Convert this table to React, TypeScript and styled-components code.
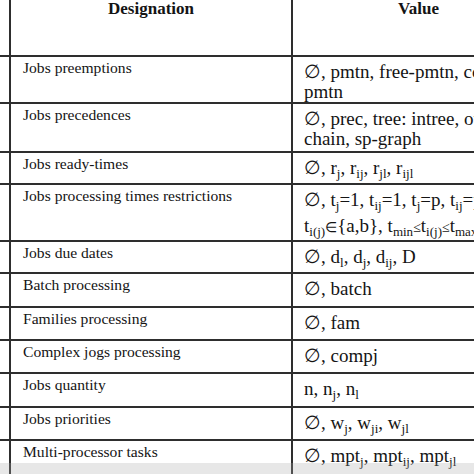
import React from "react";
import styled, { createGlobalStyle } from "styled-components";

const GlobalStyle = createGlobalStyle`
  html, body {
    margin: 0;
    padding: 0;
    background: #fff;
    overflow: hidden;
  }
`;

const Page = styled.div`
  position: relative;
  width: 474px;
  height: 474px;
  overflow: hidden;
  font-family: "Liberation Serif", "Times New Roman", serif;
  color: #141414;
`;

const Table = styled.table`
  border-collapse: collapse;
  table-layout: fixed;
  width: 544px;
  margin-top: -2px;
`;

const Row = styled.tr<{ $h: number }>`
  height: ${(p) => p.$h}px;
`;

const Cell = styled.td`
  border: 2px solid #2e2e2e;
  vertical-align: top;
  padding: 0;
`;

const EdgeCell = styled(Cell)`
  border-left: none;
`;

const HeadCell = styled(Cell)`
  border-top: none;
  text-align: center;
  font-weight: bold;
  font-size: 17px;
  line-height: 17px;
  padding-top: 2px;
`;

const NameCell = styled(Cell)`
  font-size: 15.6px;
  line-height: 18px;
  padding: 2px 0 0 12px;
  white-space: nowrap;
`;

const ValueCell = styled(Cell)`
  font-size: 19px;
  line-height: 20px;
  padding: 5px 0 0 11px;
  white-space: nowrap;
  border-right: none;
`;

const Line = styled.div<{ $gap?: number }>`
  margin-top: ${(p) => p.$gap ?? 0}px;
`;

const Sub = styled.sub`
  font-size: 13px;
  line-height: 0;
  vertical-align: -4px;
`;

const Small = styled.span`
  font-size: 14px;
`;

const Fade = styled.div`
  position: absolute;
  left: 0;
  right: 0;
  bottom: 0;
  height: 11px;
  background: rgba(170, 170, 170, 0.28);
`;

type Item = { name: string; h: number; value: React.ReactNode };

const items: Item[] = [
  {
    name: "Jobs preemptions",
    h: 47,
    value: (
      <>
        <Line>∅, pmtn, free-pmtn, cons-</Line>
        <Line>pmtn</Line>
      </>
    ),
  },
  {
    name: "Jobs precedences",
    h: 49,
    value: (
      <>
        <Line>∅, prec, tree: intree, outtree,</Line>
        <Line>chain, sp-graph</Line>
      </>
    ),
  },
  {
    name: "Jobs ready-times",
    h: 32,
    value: (
      <Line>
        ∅, r<Sub>j</Sub>, r<Sub>ij</Sub>, r<Sub>jl</Sub>, r<Sub>ijl</Sub>
      </Line>
    ),
  },
  {
    name: "Jobs processing times restrictions",
    h: 57,
    value: (
      <>
        <Line>
          ∅, t<Sub>j</Sub>=1, t<Sub>ij</Sub>=1, t<Sub>j</Sub>=p, t<Sub>ij</Sub>=p
        </Line>
        <Line $gap={6}>
          t<Sub>i(j)</Sub>
          <Small>∈</Small>
          {"{"}a,b{"}"}, t<Sub>min</Sub>
          <Small>≤</Small>t<Sub>i(j)</Sub>
          <Small>≤</Small>t<Sub>max</Sub>
        </Line>
      </>
    ),
  },
  {
    name: "Jobs due dates",
    h: 32,
    value: (
      <Line>
        ∅, d<Sub>l</Sub>, d<Sub>j</Sub>, d<Sub>ij</Sub>, D
      </Line>
    ),
  },
  { name: "Batch processing", h: 34, value: <Line>∅, batch</Line> },
  { name: "Families processing", h: 33, value: <Line>∅, fam</Line> },
  { name: "Complex jogs processing", h: 33, value: <Line>∅, compj</Line> },
  {
    name: "Jobs quantity",
    h: 34,
    value: (
      <Line>
        n, n<Sub>j</Sub>, n<Sub>l</Sub>
      </Line>
    ),
  },
  {
    name: "Jobs priorities",
    h: 33,
    value: (
      <Line>
        ∅, w<Sub>j</Sub>, w<Sub>ji</Sub>, w<Sub>jl</Sub>
      </Line>
    ),
  },
  {
    name: "Multi-processor tasks",
    h: 40,
    value: (
      <Line>
        ∅, mpt<Sub>j</Sub>, mpt<Sub>ij</Sub>, mpt<Sub>jl</Sub>
      </Line>
    ),
  },
];

export default function App() {
  return (
    <Page>
      <GlobalStyle />
      <Table>
        <colgroup>
          <col style={{ width: 10 }} />
          <col style={{ width: 282 }} />
          <col style={{ width: 252 }} />
        </colgroup>
        <tbody>
          <Row $h={58}>
            <EdgeCell as="th" style={{ borderTop: "none" }} />
            <HeadCell as="th">Designation</HeadCell>
            <HeadCell as="th" style={{ borderRight: "none" }}>
              Value
            </HeadCell>
          </Row>
          {items.map((it) => (
            <Row key={it.name} $h={it.h}>
              <EdgeCell />
              <NameCell>{it.name}</NameCell>
              <ValueCell>{it.value}</ValueCell>
            </Row>
          ))}
        </tbody>
      </Table>
      <Fade />
    </Page>
  );
}
